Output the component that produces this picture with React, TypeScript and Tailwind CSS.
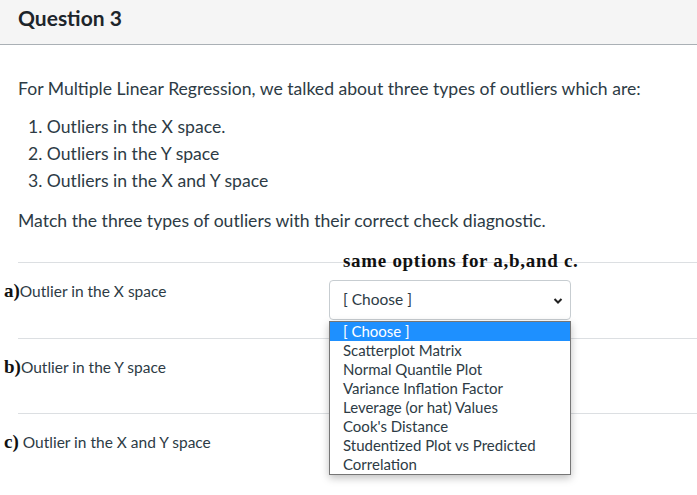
import React from 'react';

const options = [
  '[ Choose ]',
  'Scatterplot Matrix',
  'Normal Quantile Plot',
  'Variance Inflation Factor',
  'Leverage (or hat) Values',
  "Cook's Distance",
  'Studentized Plot vs Predicted',
  'Correlation',
];

const lato = { fontFamily: 'Lato, "Noto Sans", sans-serif' };
const serif = 'font-["Liberation_Serif",serif] font-bold';

const Select = () => (
  <div className="flex h-[40px] w-[242px] items-center justify-between rounded-[4px] border border-[#c7cdd1] bg-white pl-[13px] pr-[7px] text-[15.5px] text-[#2d3b45]">
    <span>[ Choose ]</span>
    <svg width="10" height="8" viewBox="0 0 10 8" className="mt-[1px]">
      <path d="M1.5 2 L5 5.5 L8.5 2" fill="none" stroke="#222" strokeWidth="2" />
    </svg>
  </div>
);

const Row = ({ letter, label, children, top = false, gap = false }: { letter: string; label: string; children?: React.ReactNode; top?: boolean; gap?: boolean }) => (
  <div className={`relative flex border-t border-[#dcdfe2] ${top ? 'h-[76px]' : 'h-[75px]'}`}>
    <div className="w-[311px] pt-[14px]">
      <div className="-ml-[14px] flex items-baseline">
        <span className={`${serif} text-[19px] text-[#111]`}>{letter}</span>
        <span className={`text-[15.5px] text-[#2d3b45] ${gap ? 'ml-[4px]' : ''}`}>{label}</span>
      </div>
    </div>
    <div className="pt-[17px]">{children}</div>
  </div>
);

export default function App() {
  return (
    <div className="min-h-[495px] w-[697px] bg-white text-[#2d3b45]" style={lato}>
      <div className="h-[45px] border-b border-[#aab0b5] bg-[#f5f5f5] pl-[18px] pt-[4px]">
        <h2 className="text-[21px] font-bold leading-[28px] text-[#1d252b]">Question 3</h2>
      </div>

      <div className="pl-[18px]">
        <p className="mt-[32px] text-[17.6px] leading-[24px]">
          For Multiple Linear Regression, we talked about three types of outliers which are:
        </p>
        <ol className="mt-[12px] text-[17.6px] leading-[27px]">
          <li className="pl-[10px]">1. Outliers in the X space.</li>
          <li className="pl-[10px]">2. Outliers in the Y space</li>
          <li className="pl-[10px]">3. Outliers in the X and Y space</li>
        </ol>
        <p className="mt-[15px] text-[17.6px] leading-[24px]">
          Match the three types of outliers with their correct check diagnostic.
        </p>

        <div className="mt-[29px]">
          <Row letter="a)" label="Outlier in the X space" top>
            <div className={`absolute left-[325px] -top-[14px] text-[19px] leading-[24px] tracking-[0.7px] text-[#111] ${serif}`}>
              same options for a,b,and c.
            </div>
            <Select />
            <div className="absolute left-[311px] top-[58px] z-10 w-[242px] border border-[#767676] bg-white shadow-[0_3px_8px_rgba(0,0,0,0.25)]">
              {options.map((o, i) => (
                <div
                  key={o}
                  className={`h-[19px] pl-[13px] text-[15px] leading-[19px] ${i === 0 ? 'bg-[#1e90ff] text-white' : 'text-[#2d3b45]'}`}
                >
                  {o}
                </div>
              ))}
            </div>
          </Row>
          <Row letter="b)" label="Outlier in the Y space" />
          <Row letter="c)" label="Outlier in the X and Y space" gap />
        </div>
      </div>
    </div>
  );
}
